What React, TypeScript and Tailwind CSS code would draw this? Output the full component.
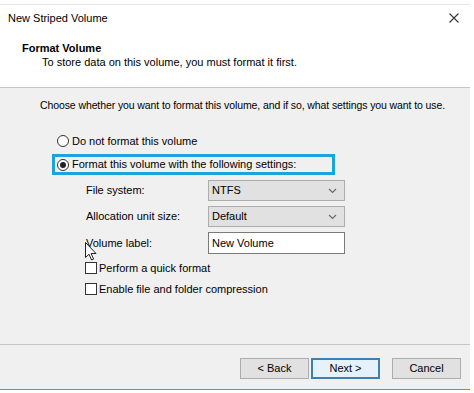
import React from "react";

function Chevron() {
  return (
    <svg width="9" height="6" viewBox="0 0 9 6" className="shrink-0">
      <path d="M1 1 L4.5 4.5 L8 1" fill="none" stroke="#6b6b6b" strokeWidth="1.2" />
    </svg>
  );
}

function Select({ value }: { value: string }) {
  return (
    <div className="w-[137px] h-[21px] bg-[#e1e1e1] border border-[#adadad] flex items-center justify-between pl-[3px] pr-[7px] text-[11px] text-black">
      <span>{value}</span>
      <Chevron />
    </div>
  );
}

function Radio({ checked }: { checked?: boolean }) {
  return (
    <div className="w-[12px] h-[12px] rounded-full border border-[#333] bg-white flex items-center justify-center shrink-0">
      {checked && <div className="w-[6px] h-[6px] rounded-full bg-[#222]" />}
    </div>
  );
}

function Checkbox() {
  return <div className="w-[12px] h-[12px] border border-[#333] bg-white shrink-0" />;
}

function Button({ label, primary }: { label: string; primary?: boolean }) {
  return (
    <div
      className={
        "w-[69px] h-[21px] flex items-center justify-center text-[11px] text-black " +
        (primary ? "bg-[#e5f1fb] border-2 border-[#3c7fb1]" : "bg-[#e1e1e1] border border-[#adadad]")
      }
    >
      {label}
    </div>
  );
}

export default function App() {
  return (
    <div
      className="w-[474px] h-[393px] bg-white overflow-hidden"
      style={{ fontFamily: '"Liberation Sans", Arial, sans-serif' }}
    >
      <div className="w-[470px] pt-[4px]">
        <div className="border-t border-[#e6e6e6]">
          {/* header */}
          <div className="h-[82px] bg-white relative">
            <div className="flex items-center justify-between h-[26px] pl-[8px] pr-[11px]">
              <span className="text-[11px] text-black">New Striped Volume</span>
              <svg width="10" height="10" viewBox="0 0 10 10">
                <path d="M0.5 0.5 L9.5 9.5 M9.5 0.5 L0.5 9.5" stroke="#333" strokeWidth="1.1" />
              </svg>
            </div>
            <div className="pl-[22px] pt-[10px] text-[11px] font-bold text-black leading-[14px]">Format Volume</div>
            <div className="pl-[42px] text-[11px] text-black leading-[14px]">
              To store data on this volume, you must format it first.
            </div>
          </div>
          <div className="h-px bg-[#c6c6c6]" />
          {/* body */}
          <div className="bg-[#f0f0f0] h-[256px] relative text-[11px] text-black">
            <div className="pl-[40px] pt-[10px] leading-[14px] whitespace-nowrap text-[10.5px] tracking-[-0.1px]">
              Choose whether you want to format this volume, and if so, what settings you want to use.
            </div>
            <div className="pl-[57px] pt-[22px] flex items-center gap-[3px] h-[14px] box-content">
              <Radio />
              <span>Do not format this volume</span>
            </div>
            <div className="ml-[52px] mt-[6px] w-[283px] h-[21px] border-[3px] border-[#1aa3dc] flex items-center gap-[3px] pl-[2px]">
              <Radio checked />
              <span>Format this volume with the following settings:</span>
            </div>
            <div className="pl-[86px] pt-[5px] flex flex-col gap-[5px]">
              <div className="flex items-center">
                <span className="w-[122px]">File system:</span>
                <Select value="NTFS" />
              </div>
              <div className="flex items-center">
                <span className="w-[122px]">Allocation unit size:</span>
                <Select value="Default" />
              </div>
              <div className="flex items-center">
                <span className="w-[122px]">Volume label:</span>
                <div className="w-[137px] h-[22px] bg-white border border-[#7a7a7a] flex items-center pl-[3px]">
                  New Volume
                </div>
              </div>
            </div>
            <div className="pl-[85px] pt-[6px] flex flex-col gap-[4px]">
              <div className="flex items-center gap-[2px]">
                <Checkbox />
                <span>Perform a quick format</span>
              </div>
              <div className="flex items-center gap-[2px]">
                <Checkbox />
                <span>Enable file and folder compression</span>
              </div>
            </div>
            {/* mouse cursor */}
            <svg className="absolute left-[85px] top-[154px]" width="12" height="19" viewBox="0 0 12 19">
              <path
                d="M0.5 0.5 L0.5 15.5 L4 12.2 L6.6 18 L8.6 17.1 L6.1 11.5 L11 11.5 Z"
                fill="#fff"
                stroke="#222"
                strokeWidth="1"
                strokeLinejoin="round"
              />
            </svg>
          </div>
          <div className="h-px bg-[#c6c6c6]" />
          {/* footer */}
          <div className="bg-[#f0f0f0] h-[44px] flex items-start pt-[13px] pl-[240px]">
            <Button label="< Back" />
            <div className="w-[2px]" />
            <Button label="Next >" primary />
            <div className="w-[12px]" />
            <Button label="Cancel" />
          </div>
          <div className="h-px bg-[#4a9ad8]" />
        </div>
      </div>
    </div>
  );
}
